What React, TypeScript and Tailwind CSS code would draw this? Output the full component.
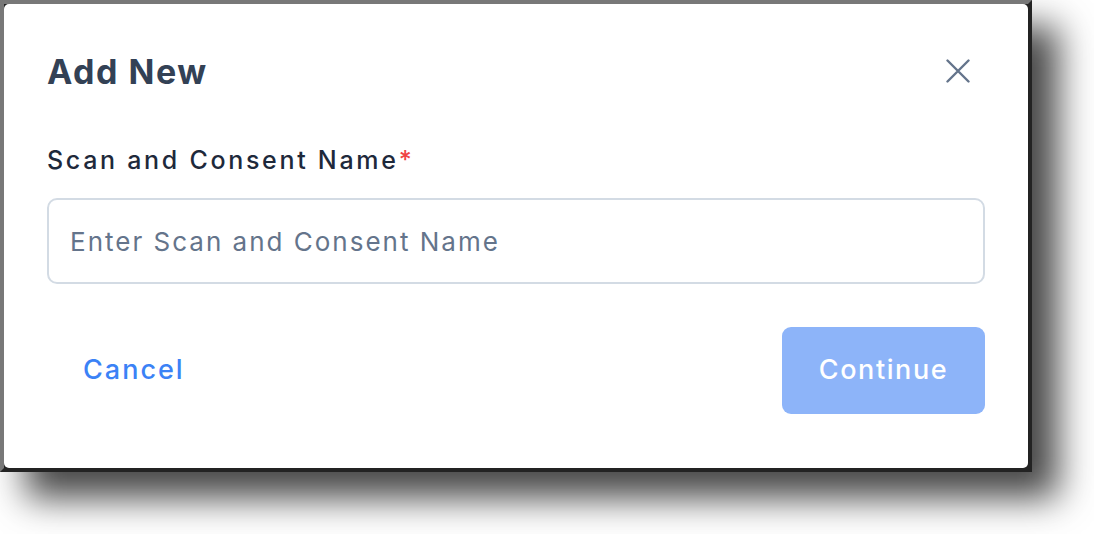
import React from "react";

export default function App() {
  return (
    <div className="w-[1094px] h-[534px] bg-white relative" style={{ fontFamily: "Inter, 'Noto Sans', sans-serif" }}>
      <div className="w-[1032px] h-[472px] border-4 border-t-[#787878] border-l-[#787878] border-r-[#232323] border-b-[#232323] shadow-[26px_26px_34px_rgba(0,0,0,0.72)] bg-[#232323]">
        <div className="w-full h-full bg-white rounded-[5px] px-[43px] pt-[40px]">
          <div className="h-[54px] flex items-center justify-between">
            <h1 className="text-[34px] font-bold text-[#334155] tracking-[1.5px]">Add New</h1>
            <svg width="24" height="24" viewBox="0 0 24 24" className="mr-[15px]" fill="none" stroke="#64748b" strokeWidth="2.4" strokeLinecap="round">
              <path d="M1.5 1.5L22.5 22.5M22.5 1.5L1.5 22.5" />
            </svg>
          </div>
          <div className="mt-[48px] h-[30px] flex items-center text-[25px] font-medium text-[#1e293b] tracking-[2.7px]">
            Scan and Consent Name<span className="text-[#ef4444] tracking-normal">*</span>
          </div>
          <div className="mt-[22px] h-[86px] rounded-[10px] border-2 border-[#d3dbe4] flex items-center px-[21px] text-[26px] text-[#64748b] tracking-[2px]">
            Enter Scan and Consent Name
          </div>
          <div className="mt-[43px] h-[87px] flex items-center justify-between">
            <button className="h-full px-[36px] text-[27px] font-medium text-[#3b82f6] tracking-[2px]">Cancel</button>
            <button className="h-full w-[203px] rounded-[9px] bg-[#8db4f9] text-[27px] font-medium text-white tracking-[1.6px]">Continue</button>
          </div>
        </div>
      </div>
    </div>
  );
}
